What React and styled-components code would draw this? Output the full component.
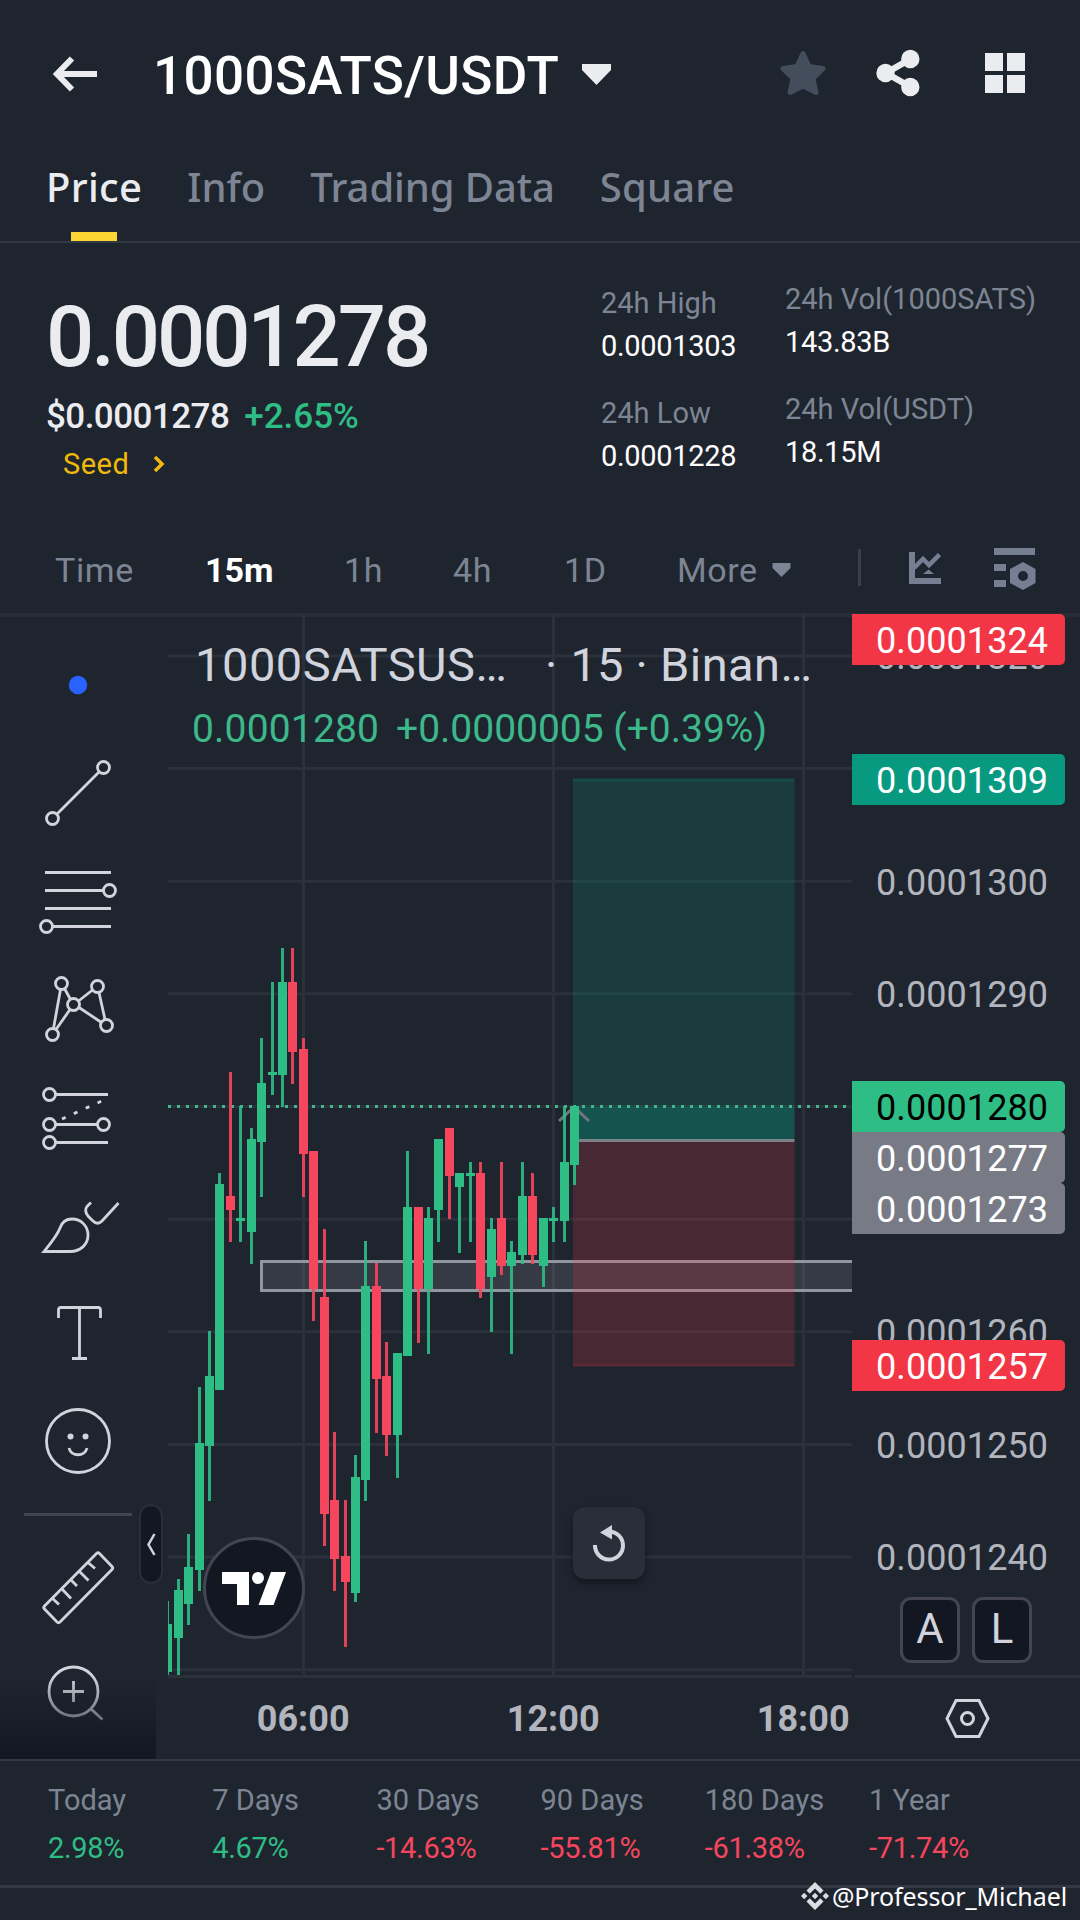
import React, { useState } from 'react'
import styled, { createGlobalStyle } from 'styled-components'


const GlobalStyle = createGlobalStyle`
    * {
        box-sizing: border-box;
    }

    body {
        margin: 0;
        background: #1f252f;
        font-family: Roboto, "Liberation Sans", sans-serif;
    }

    button {
        border: none;
        padding: 0;
        background: none;
        color: inherit;
        font: inherit;
        letter-spacing: inherit;
    }

    svg {
        display: block;
    }
`

const Page = styled.main`
    position: relative;
    width: 1080px;
    height: 1920px;
    overflow: hidden;
    background: #1f252f;
    color: #eaecef;
`

const Header = styled.header`
    display: flex;
    align-items: center;
    height: 150px;
    padding: 0 55px 0 53px;
`

const Title = styled.h1`
    margin: 1px 23px 0 55px;
    font-size: 53px;
    font-weight: 500;
    line-height: 60px;
    letter-spacing: .35px;
    color: #fff;
`

const HeaderIcons = styled.div`
    display: flex;
    align-items: center;
    margin-left: auto;
    margin-top: -4px;
`

const Star = styled.svg`
    margin-right: 50px;
`

const Share = styled.svg`
    margin-right: 65px;
`

const Tabs = styled.nav`
    display: flex;
    height: 93px;
    padding: 13px 46px 0;
    border-bottom: 2px solid #323943;
`

const Tab = styled.button`
    display: flex;
    flex-direction: column;
    align-items: center;
    margin-right: 45px;
    font-family: "Noto Sans", sans-serif;
    font-size: 40px;
    font-weight: 500;
    line-height: 48px;
    letter-spacing: ${props => props.$spacing};
    color: ${props => props.$active ? "#eaecef" : "#7d8594"};

    &::after {
        content: "";
        width: 46px;
        height: 9px;
        margin-top: 21px;
        background: ${props => props.$active ? "#fcd535" : "transparent"};
    }
`

const Summary = styled.section`
    display: flex;
    height: 282px;
    padding-left: 46px;
`

const PriceColumn = styled.div`
    width: 555px;
    padding-top: 52px;
`

const Price = styled.div`
    font-size: 85px;
    font-weight: 500;
    line-height: 84px;
    letter-spacing: -3.1px;
`

const SubPrice = styled.div`
    display: flex;
    gap: 15px;
    margin-top: 18px;
    font-size: 35px;
    font-weight: 500;
    line-height: 40px;
    letter-spacing: -.55px;
`

const Up = styled.span`
    letter-spacing: 0;
    color: #2ebd85;
`

const SeedTag = styled.div`
    display: flex;
    align-items: center;
    gap: 24px;
    margin: 7px 0 0 17px;
    font-size: 29px;
    line-height: 40px;
    letter-spacing: .5px;
    color: #f0b90b;
`

const StatColumn = styled.dl`
    width: ${props => props.$width};
    margin: 0;
    padding-top: ${props => props.$top};
    font-size: 29px;
    line-height: 36px;
`

const StatLabel = styled.dt`
    color: #7d8594;
    white-space: nowrap;
`

const StatValue = styled.dd`
    margin: 7px 0 31px;
    letter-spacing: -.3px;
    color: #fff;
`

const Toolbar = styled.nav`
    display: flex;
    align-items: center;
    height: 92px;
    padding: 2px 0 0 55px;
    border-bottom: 4px solid #272e38;
    font-size: 34px;
    line-height: 40px;
    letter-spacing: .6px;
    color: #7d8594;
`

const Interval = styled.button`
    width: ${props => props.$width};
    text-align: left;
    font-weight: ${props => props.$active ? 700 : 400};
    letter-spacing: ${props => props.$active ? 0 : "inherit"};
    color: ${props => props.$active ? "#fff" : "inherit"};
`

const More = styled.button`
    display: flex;
    align-items: center;
    gap: 14px;
    width: 181px;
`

const Separator = styled.span`
    width: 3px;
    height: 37px;
    margin: -5px 48px 0 0;
    background: #383f4a;
`

const IndicatorIcon = styled.svg`
    margin: -4px 53px 0 0;
`

const SettingsIcon = styled.svg`
    margin-top: -2px;
`

const ChartArea = styled.section`
    position: relative;
    display: flex;
    height: 1142px;
`

const Tools = styled.aside`
    position: relative;
    width: 156px;
    padding-top: 14px;

    &::after {
        content: "";
        position: absolute;
        left: 0;
        right: 0;
        bottom: 0;
        height: 84px;
        background: linear-gradient(rgba(19, 23, 34, 0), #131722);
    }
`

const Tool = styled.button`
    display: block;
    width: 156px;
    height: 108px;
`

const ToolDivider = styled.hr`
    width: 108px;
    height: 3px;
    margin: 18px 24px;
    border: none;
    background: #434651;
`

const ChartSvg = styled.svg`
    overflow: visible;
    font-family: Roboto, sans-serif;
`

const CollapseHandle = styled.button`
    position: absolute;
    left: 139px;
    top: 887px;
    display: flex;
    align-items: center;
    justify-content: center;
    width: 24px;
    height: 80px;
    border: 2px solid #2a2e39;
    border-radius: 12px;
    background: #131722;
`

const LogoBadge = styled.div`
    position: absolute;
    left: 203px;
    top: 920px;
    display: flex;
    align-items: center;
    justify-content: center;
    width: 102px;
    height: 102px;
    border: 3px solid #434651;
    border-radius: 50%;
    background: #131722;
`

const ResetButton = styled.button`
    position: absolute;
    left: 573px;
    top: 890px;
    display: flex;
    align-items: center;
    justify-content: center;
    width: 72px;
    height: 72px;
    border-radius: 12px;
    background: #2a2e39;
    box-shadow: 0 4px 8px rgba(0, 0, 0, .4);
`

const ScaleButtons = styled.div`
    position: absolute;
    left: 900px;
    top: 980px;
    display: flex;
    gap: 12px;
`

const ScaleButton = styled.button`
    width: 60px;
    height: 66px;
    padding-bottom: 2px;
    border: 3px solid #434651;
    border-radius: 11px;
    background: #131722;
    font-size: 42px;
    line-height: 58px;
    color: #d1d4dc;
`

const Periods = styled.section`
    display: flex;
    height: 129px;
    padding: 19px 0 0 48px;
    border-top: 2px solid #323943;
    border-bottom: 3px solid #323943;
    font-size: 29px;
    line-height: 40px;
`

const Period = styled.div`
    width: 164.2px;
    white-space: nowrap;
    color: #7d8594;
`

const PeriodChange = styled.div`
    margin-top: 8px;
    letter-spacing: -.3px;
    color: ${props => props.$down ? "#f6465d" : "#2ebd85"};
`

const Watermark = styled.div`
    position: absolute;
    right: 13px;
    bottom: 6px;
    display: flex;
    align-items: center;
    gap: 3px;
    font-family: "Noto Sans", sans-serif;
    font-size: 25px;
    line-height: 36px;
    letter-spacing: -.1px;
    color: #fff;
`


const tabs = [
    { name: "Price", spacing: ".3px" },
    { name: "Info", spacing: "0" },
    { name: "Trading Data", spacing: "-.1px" },
    { name: "Square", spacing: ".2px" }
]

const intervals = [
    { name: "Time", width: "150px" },
    { name: "15m", width: "139px" },
    { name: "1h", width: "109px" },
    { name: "4h", width: "111px" },
    { name: "1D", width: "113px" }
]

const periods = [
    ["Today", "2.98%"],
    ["7 Days", "4.67%"],
    ["30 Days", "-14.63%"],
    ["90 Days", "-55.81%"],
    ["180 Days", "-61.38%"],
    ["1 Year", "-71.74%"]
]

// [open, high, low, close], prices in 1e-7 USDT, one candle per 15 minutes from 02:45
const candles = [
    [1230, 1236, 1229, 1234],
    [1233, 1238, 1229, 1237],
    [1236, 1242, 1234, 1239],
    [1239, 1255, 1237, 1250],
    [1250, 1260, 1245, 1256],
    [1255, 1274, 1255, 1273],
    [1272, 1283, 1268, 1271],
    [1270, 1280, 1268, 1270],
    [1269, 1278, 1266, 1277],
    [1277, 1286, 1272, 1282],
    [1283, 1291, 1281, 1283],
    [1283, 1294, 1280, 1291],
    [1291, 1294, 1282, 1285],
    [1285, 1286, 1272, 1276],
    [1276, 1276, 1261, 1264],
    [1263, 1269, 1241, 1244],
    [1245, 1251, 1237, 1240],
    [1240, 1245, 1232, 1238],
    [1237, 1249, 1236, 1247],
    [1247, 1268, 1245, 1264],
    [1264, 1266, 1251, 1256],
    [1256, 1259, 1249, 1251],
    [1251, 1258, 1247, 1258],
    [1258, 1276, 1258, 1271],
    [1271, 1271, 1259, 1264],
    [1264, 1271, 1258, 1270],
    [1271, 1277, 1268, 1277],
    [1278, 1278, 1270, 1274],
    [1273, 1274, 1267, 1274],
    [1274, 1275, 1268, 1274],
    [1274, 1275, 1263, 1264],
    [1265, 1270, 1260, 1269],
    [1270, 1275, 1265, 1266],
    [1266, 1268, 1258, 1267],
    [1267, 1275, 1266, 1272],
    [1272, 1274, 1266, 1267],
    [1266, 1270, 1264, 1270],
    [1270, 1271, 1268, 1270],
    [1270, 1280, 1268, 1275],
    [1275, 1280, 1273, 1280]
]

const priceTags = [
    { label: "0.0001324", y: 614, color: "#f23645" },
    { label: "0.0001309", y: 754, color: "#089981" },
    { label: "0.0001277", y: 1132, color: "#787b86" },
    { label: "0.0001273", y: 1183, color: "#787b86" },
    { label: "0.0001280", y: 1081, color: "#2ebd85", text: "#000" },
    { label: "0.0001257", y: 1340, color: "#f23645" }
]

const times = [["06:00", 303.5], ["12:00", 553.5], ["18:00", 803.5]]
const gridPrices = [1320, 1310, 1300, 1290, 1280, 1270, 1260, 1250, 1240, 1230]
const axisPrices = [1320, 1300, 1290, 1260, 1250, 1240]

const priceY = (price) => 1106.5 + (1280 - price) * 11.265
const candleX = (index) => Math.round(302.89 + (index - 13) * 10.425)

const Candle = ({ data, index }) => {
    const [open, high, low, close] = data
    const up = close >= open
    const x = candleX(index)
    const top = Math.round(priceY(Math.max(open, close)) - 1)
    const bottom = Math.round(priceY(Math.min(open, close)) + 2)
    const wickTop = Math.round(priceY(high) - 1)
    const wickBottom = Math.round(priceY(low))

    return (
        <g fill={up ? "#2ebd85" : "#f6465d"}>
            <rect x={x - 1} y={wickTop} width="3" height={wickBottom - wickTop} opacity=".9"/>
            <rect x={x - 4} y={top} width="9" height={bottom - top}/>
        </g>
    )
}

const Chart = () => (
    <ChartSvg width="924" height="1142" viewBox="156 617 924 1142">
        <clipPath id="plot">
            <rect x="168" y="613" width="684" height="1062"/>
        </clipPath>

        <g stroke="#2a313b" strokeWidth="3">
            {gridPrices.map(price => (
                <line key={price} x1="168" x2="852" y1={priceY(price)} y2={priceY(price)}/>
            ))}
            {times.map(([label, x]) => <line key={label} x1={x} x2={x} y1="613" y2="1675"/>)}
            <line x1="168" x2="852" y1="1676.5" y2="1676.5"/>
            <line x1="855" x2="1080" y1="1676.5" y2="1676.5"/>
        </g>

        <g clipPath="url(#plot)">
            <rect x="261.5" y="1261.5" width="620" height="29" fill="rgba(178,181,190,.15)" stroke="#9195a0" strokeWidth="3"/>

            <rect x="573" y="778.5" width="221.5" height="361.5" fill="#089981" fillOpacity=".2"/>
            <rect x="573" y="778.5" width="221.5" height="3" fill="#089981" fillOpacity=".15"/>
            <rect x="573" y="1107" width="221.5" height="33" fill="#089981" fillOpacity=".25"/>
            <rect x="573" y="1140" width="221.5" height="226.5" fill="#f23645" fillOpacity=".2"/>
            <rect x="573" y="1363.5" width="221.5" height="3" fill="#f23645" fillOpacity=".1"/>
            <rect x="573" y="1139" width="221.5" height="3" fill="#7b808a"/>
            <path d="M559 1121L574 1107L589 1121" fill="none" stroke="#717680" strokeWidth="3"/>

            <line x1="168" x2="852" y1="1106.5" y2="1106.5" stroke="#45b58c" strokeWidth="3" strokeDasharray="3 6"/>
            {candles.map((candle, index) => <Candle key={index} data={candle} index={index}/>)}
        </g>

        <g fill="#d1d4dc" fontSize="47">
            <text x="195" y="681" textLength="312">1000SATSUS…</text>
            <text x="545" y="681">·</text>
            <text x="570.5" y="681">15</text>
            <text x="635.5" y="681">·</text>
            <text x="660" y="681" textLength="152">Binan…</text>
        </g>
        <g fill="#3cb88a" fontSize="39">
            <text x="192" y="742" textLength="187">0.0001280</text>
            <text x="396" y="742" textLength="371">+0.0000005 (+0.39%)</text>
        </g>

        <g fontSize="36" fill="#b2b5be">
            {axisPrices.map(price => (
                <text key={price} x="876" y={Math.round(priceY(price) + 13.300)} textLength="172">{`0.000${price}`}</text>
            ))}
        </g>
        {priceTags.map(tag => (
            <g key={tag.label}>
                <path d={`M852 ${tag.y}h208a5 5 0 0 1 5 5v41a5 5 0 0 1 -5 5h-208z`} fill={tag.color}/>
                <text x="876" y={tag.y + 38.5} textLength="172" fontSize="36" fill={tag.text || "#fff"}>{tag.label}</text>
            </g>
        ))}

        <g fontSize="36" fontWeight="700" fill="#b2b5be" textAnchor="middle">
            {times.map(([label, x]) => <text key={label} x={x - .3} y="1731">{label}</text>)}
        </g>
        <g fill="none" stroke="#d1d4dc" strokeWidth="3">
            <path d="M956 1700.500H979L988 1718.500L979 1736.500H956L947 1718.500Z"/>
            <circle cx="967.500" cy="1718.500" r="6"/>
        </g>
    </ChartSvg>
)

const toolIcons = {
    "Cursor": <circle cx="78" cy="54" r="9.200" fill="#2962ff" stroke="none"/>,
    "Trend line": (
        <>
            <circle cx="52.500" cy="79.500" r="6"/>
            <circle cx="103.500" cy="28.500" r="6"/>
            <path d="M57 75L99 33"/>
        </>
    ),
    "Fib retracement": (
        <>
            <path d="M45 25.500H111M45 43.500H103M45 61.500H111M53 79.500H111"/>
            <circle cx="109.500" cy="43.500" r="6"/>
            <circle cx="46.500" cy="79.500" r="6"/>
        </>
    ),
    "Patterns": (
        <>
            <circle cx="61.500" cy="28.500" r="6"/>
            <circle cx="97.500" cy="31.500" r="6"/>
            <circle cx="73.500" cy="49.500" r="6"/>
            <circle cx="106.500" cy="70.500" r="6"/>
            <circle cx="52.500" cy="79.500" r="6"/>
            <path d="M60.500 34.500L53.500 73.500M64.500 33.500L70.500 44.500M70 54.500L56 74.500M78.500 46L92.500 35M99 37.500L105 64.500M79 52.500L101.500 67.500"/>
        </>
    ),
    "Forecast": (
        <>
            <circle cx="49.500" cy="31.500" r="6"/>
            <circle cx="49.500" cy="61.500" r="6"/>
            <circle cx="103.500" cy="61.500" r="6"/>
            <circle cx="49.500" cy="79.500" r="6"/>
            <path d="M56 31.500H108M56 61.500H97M56 79.500H108"/>
            <path d="M62 56L104 37" strokeDasharray="4 9"/>
        </>
    ),
    "Brush": (
        <>
            <path d="M44 80.500H70C81 80.500 88 73 88 64C88 55 81 48 72 48C66 48 62 51 60 57C57 65 50 73 44 80.500Z"/>
            <path d="M91 31.500L87 35.500C85 38 85 41 88 45L93 50C96 53 99 53 102 50L118.500 32"/>
        </>
    ),
    "Text": <path d="M58.500 39V31Q58.500 28.500 61 28.500H98Q100.500 28.500 100.500 31V39M79.500 28.500V79.500M72 79.500H87"/>,
    "Emoji": (
        <>
            <circle cx="78" cy="54" r="31.500"/>
            <circle cx="70.500" cy="49.500" r="3" fill="#d1d4dc" stroke="none"/>
            <circle cx="85.500" cy="49.500" r="3" fill="#d1d4dc" stroke="none"/>
            <path d="M69 61C71 70 85 70 87 61"/>
        </>
    ),
    "Measure": (
        <>
            <path d="M96.500 19.500Q98 18 99.500 19.500L112 32.500Q113.500 34 112 35.500L60 88Q58.500 89.500 57 88L44.500 75Q43 73.500 44.500 72Z"/>
            <path d="M52 64L59 70.500M61.500 54.500L71 64.500M70.500 45.500L77 52M79 37L88.500 46.500M88 28.500L95 34.500"/>
        </>
    ),
    "Zoom in": (
        <>
            <circle cx="73.500" cy="49.500" r="24.500"/>
            <path d="M63 49.500H84M73.500 39V60M91 67L102.500 77.500"/>
        </>
    )
}

const ToolButton = ({ name }) => (
    <Tool aria-label={name}>
        <svg width="156" height="108" viewBox="0 0 156 108" fill="none" stroke="#d1d4dc" strokeWidth="2.800">
            {toolIcons[name]}
        </svg>
    </Tool>
)

export default function App() {
    const [activeTab, setActiveTab] = useState("Price")
    const [activeInterval, setActiveInterval] = useState("15m")

    return (
        <Page>
            <GlobalStyle/>

            <Header>
                <svg width="45" height="38" viewBox="0 0 45 38" fill="none" stroke="#eaecef" strokeWidth="6">
                    <path d="M44 18H5M19 2.500L4 18L19 33.500"/>
                </svg>
                <Title>1000SATS/USDT</Title>
                <svg width="29" height="22" viewBox="0 0 29 22" fill="#eaecef">
                    <path d="M0 0H29V6L14.500 21L0 6Z"/>
                </svg>
                <HeaderIcons>
                    <Star width="46" height="46" viewBox="0 0 46 46" fill="#444d5b" stroke="#444d5b" strokeWidth="5" strokeLinejoin="round">
                        <path d="M23 3.500L29 16.500L43 18.500L33 28.500L36 42.500L23 36L10 42.500L13 28.500L3 18.500L17 16.500Z"/>
                    </Star>
                    <Share width="44" height="48" viewBox="0 0 44 48" fill="#eaecef">
                        <path d="M10 24L34.500 10M10 24L34.500 38" stroke="#eaecef" strokeWidth="6.500"/>
                        <circle cx="9.500" cy="24" r="9.200"/>
                        <circle cx="34.300" cy="10" r="9.200"/>
                        <circle cx="34.300" cy="38" r="9.200"/>
                    </Share>
                    <svg width="40" height="40" viewBox="0 0 40 40" fill="#eaecef">
                        <path d="M0 0H18V18H0ZM22 0H40V18H22ZM0 22H18V40H0ZM22 22H40V40H22Z"/>
                    </svg>
                </HeaderIcons>
            </Header>

            <Tabs>
                {tabs.map(({ name, spacing }) => (
                    <Tab
                        key={name}
                        $active={name === activeTab}
                        $spacing={spacing}
                        onClick={() => setActiveTab(name)}
                    >
                        {name}
                    </Tab>
                ))}
            </Tabs>

            <Summary>
                <PriceColumn>
                    <Price>0.0001278</Price>
                    <SubPrice>
                        <span>$0.0001278</span>
                        <Up>+2.65%</Up>
                    </SubPrice>
                    <SeedTag>
                        Seed
                        <svg width="12" height="18" viewBox="0 0 12 18" fill="none" stroke="#f0b90b" strokeWidth="3.500">
                            <path d="M2 2L9 9L2 16"/>
                        </svg>
                    </SeedTag>
                </PriceColumn>
                <StatColumn $width="184px" $top="42px">
                    <StatLabel>24h High</StatLabel>
                    <StatValue>0.0001303</StatValue>
                    <StatLabel>24h Low</StatLabel>
                    <StatValue>0.0001228</StatValue>
                </StatColumn>
                <StatColumn $width="260px" $top="38px">
                    <StatLabel>24h Vol(1000SATS)</StatLabel>
                    <StatValue>143.83B</StatValue>
                    <StatLabel>24h Vol(USDT)</StatLabel>
                    <StatValue>18.15M</StatValue>
                </StatColumn>
            </Summary>

            <Toolbar>
                {intervals.map(({ name, width }) => (
                    <Interval
                        key={name}
                        $width={width}
                        $active={name === activeInterval}
                        onClick={() => setActiveInterval(name)}
                    >
                        {name}
                    </Interval>
                ))}
                <More>
                    More
                    <svg width="19" height="15" viewBox="0 0 18 15" fill="#7d8594">
                        <path d="M0 0H18V5L9 14L0 5Z"/>
                    </svg>
                </More>
                <Separator/>
                <IndicatorIcon width="32" height="32" viewBox="0 0 32 32" fill="#767f92">
                    <path d="M0 0H6V26H32V32H0Z"/>
                    <path d="M5 16L14 7L20 13L30.500 2.500" fill="none" stroke="#767f92" strokeWidth="4.500"/>
                    <path d="M19.500 17.500L25 22H14Z"/>
                </IndicatorIcon>
                <SettingsIcon width="42" height="43" viewBox="0 0 42 43" fill="#767f92">
                    <path d="M0 0H41V7H0ZM0 16H12V23H0ZM0 32H12V39H0Z"/>
                    <path fillRule="evenodd" d="M29 14L41.500 21V35L29 42L16 35V21ZM29 23A5 5 0 1 0 29 33A5 5 0 1 0 29 23Z"/>
                </SettingsIcon>
            </Toolbar>

            <ChartArea>
                <Tools>
                    {Object.keys(toolIcons).slice(0, 8).map(name => <ToolButton key={name} name={name}/>)}
                    <ToolDivider/>
                    {Object.keys(toolIcons).slice(8).map(name => <ToolButton key={name} name={name}/>)}
                </Tools>

                <Chart/>

                <CollapseHandle aria-label="Hide tools">
                    <svg width="10" height="23" viewBox="0 0 10 23" fill="none" stroke="#d1d4dc" strokeWidth="2.500">
                        <path d="M8.500 1L2.500 11.500L8.500 22"/>
                    </svg>
                </CollapseHandle>

                <LogoBadge>
                    <svg width="64" height="33" viewBox="0 0 64 33" fill="#fff">
                        <path d="M0 0H27V33H15V12H0ZM49 0H64L51.500 33H36.500Z"/>
                        <circle cx="36" cy="6" r="6"/>
                    </svg>
                </LogoBadge>

                <ResetButton aria-label="Reset chart">
                    <svg width="34" height="38" viewBox="0 0 34 38" fill="none" stroke="#d1d4dc" strokeWidth="4">
                        <path d="M3 21A14 14 0 1 0 17 7.500"/>
                        <path d="M8 8.500L20 1V15.500Z" fill="#d1d4dc" stroke="none"/>
                    </svg>
                </ResetButton>

                <ScaleButtons>
                    <ScaleButton>A</ScaleButton>
                    <ScaleButton>L</ScaleButton>
                </ScaleButtons>
            </ChartArea>

            <Periods>
                {periods.map(([label, change]) => (
                    <Period key={label}>
                        {label}
                        <PeriodChange $down={change.startsWith("-")}>{change}</PeriodChange>
                    </Period>
                ))}
            </Periods>

            <Watermark>
                <svg width="28" height="28" viewBox="0 0 28 28" fill="#dcdde0">
                    <path d="M14 0L22.500 8.500L19.300 11.700L14 6.400L8.700 11.700L5.500 8.500ZM14 28L5.500 19.500L8.700 16.300L14 21.600L19.300 16.300L22.500 19.500ZM3.200 10.800L6.400 14L3.200 17.200L0 14ZM24.800 10.800L28 14L24.800 17.200L21.600 14ZM14 10.800L17.200 14L14 17.200L10.800 14Z"/>
                </svg>
                @Professor_Michael
            </Watermark>
        </Page>
    )
}
